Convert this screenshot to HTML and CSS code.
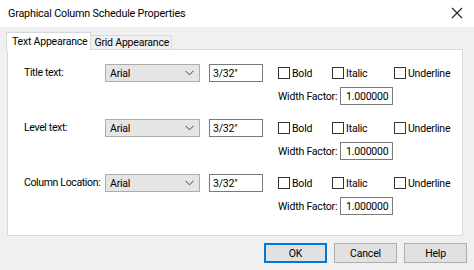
FILE: index.html
```html
<!DOCTYPE html>
<html>
<head>
<meta charset="utf-8">
<link rel="stylesheet" href="styles.css">
</head>
<body>
<div class="dialog">
  <div class="titlebar">
    <span class="title">Graphical Column Schedule Properties</span>
    <svg class="close" width="12" height="12" viewBox="0 0 12 12"><path d="M1 1 L11 11 M11 1 L1 11" stroke="#222" stroke-width="1.1" fill="none"/></svg>
  </div>
  <div class="content">
    <div class="tabs">
      <div class="tab active">Text Appearance</div>
      <div class="tab">Grid Appearance</div>
    </div>
    <div class="panel">
      <div class="group">
        <div class="line">
          <span class="label">Title text:</span>
          <div class="select"><span>Arial</span><svg width="9" height="6" viewBox="0 0 9 6"><path d="M0.5 0.8 L4.5 4.8 L8.5 0.8" stroke="#444" fill="none"/></svg></div>
          <div class="input size">3/32"</div>
          <div class="checks">
            <label class="check c1"><span class="box"></span>Bold</label>
            <label class="check c2"><span class="box"></span>Italic</label>
            <label class="check"><span class="box"></span>Underline</label>
          </div>
        </div>
        <div class="wf"><span class="wflabel">Width Factor:</span><div class="input num">1.000000</div></div>
      </div>
      <div class="group">
        <div class="line">
          <span class="label">Level text:</span>
          <div class="select"><span>Arial</span><svg width="9" height="6" viewBox="0 0 9 6"><path d="M0.5 0.8 L4.5 4.8 L8.5 0.8" stroke="#444" fill="none"/></svg></div>
          <div class="input size">3/32"</div>
          <div class="checks">
            <label class="check c1"><span class="box"></span>Bold</label>
            <label class="check c2"><span class="box"></span>Italic</label>
            <label class="check"><span class="box"></span>Underline</label>
          </div>
        </div>
        <div class="wf"><span class="wflabel">Width Factor:</span><div class="input num">1.000000</div></div>
      </div>
      <div class="group">
        <div class="line">
          <span class="label">Column Location:</span>
          <div class="select"><span>Arial</span><svg width="9" height="6" viewBox="0 0 9 6"><path d="M0.5 0.8 L4.5 4.8 L8.5 0.8" stroke="#444" fill="none"/></svg></div>
          <div class="input size">3/32"</div>
          <div class="checks">
            <label class="check c1"><span class="box"></span>Bold</label>
            <label class="check c2"><span class="box"></span>Italic</label>
            <label class="check"><span class="box"></span>Underline</label>
          </div>
        </div>
        <div class="wf"><span class="wflabel">Width Factor:</span><div class="input num">1.000000</div></div>
      </div>
    </div>
    <div class="buttons">
      <div class="btn default">OK</div>
      <div class="btn">Cancel</div>
      <div class="btn">Help</div>
    </div>
  </div>
</div>
</body>
</html>
```
FILE: styles.css
```css
* { box-sizing: border-box; }
html, body { margin: 0; padding: 0; }
body {
  width: 474px;
  height: 270px;
  overflow: hidden;
  font-family: Roboto, "Noto Sans", sans-serif;
  font-size: 10.5px;
  letter-spacing: -0.2px;
  color: #000;
  background: #f0f0f0;
  white-space: nowrap;
}
.dialog { width: 474px; height: 270px; display: flex; flex-direction: column; }
.titlebar {
  height: 27px;
  background: #fff;
  display: flex;
  align-items: center;
  justify-content: space-between;
  padding: 0 11px 0 8px;
  flex-shrink: 0;
}
.title { color: #000; font-size: 10.8px; }
.close { margin-top: -1px; }
.content { padding: 5px 11px 0 7px; flex: 1; display: flex; flex-direction: column; }
.tabs { display: flex; align-items: flex-end; height: 17px; margin-left: -1px; }
.tab {
  height: 14px;
  padding: 0 2px 0 3px;
  border: 1px solid #d9d9d9;
  border-bottom: none;
  background: #f0f0f0;
  line-height: 14px;
  margin-left: -1px;
}
.tab.active {
  height: 18px;
  background: #fff;
  padding: 0 3px 0 5px;
  line-height: 17px;
  position: relative;
  z-index: 1;
  margin-bottom: -1px;
  margin-left: 0;
}
.panel {
  height: 187px;
  background: #fff;
  border: 1px solid #d9d9d9;
  padding: 14px 0 0 16px;
  display: flex;
  flex-direction: column;
  gap: 14px;
}
.group { display: flex; flex-direction: column; gap: 5px; }
.line { display: flex; align-items: center; height: 18px; }
.label { width: 81px; margin-top: -2px; letter-spacing: -0.35px; }
.select {
  width: 95px;
  height: 18px;
  background: #e5e5e5;
  border: 1px solid #adadad;
  display: flex;
  align-items: center;
  justify-content: space-between;
  padding: 0 5px 0 4px;
}
.select span { margin-top: 1px; }
.input {
  height: 18px;
  border: 1px solid #7a7a7a;
  background: #fff;
  display: flex;
  align-items: center;
  padding: 0 3px;
}
.size { width: 54px; margin-left: 9px; }
.checks { display: flex; margin-left: 15px; }
.check { display: flex; align-items: center; }
.c1 { width: 54px; }
.c2 { width: 62px; }
.box {
  width: 12px;
  height: 12px;
  border: 1px solid #333;
  background: #fff;
  margin-right: 2px;
}
.wf { display: flex; align-items: center; height: 18px; padding-left: 254px; }
.wflabel { width: 62px; }
.num { width: 53px; padding-left: 5px; }
.buttons {
  display: flex;
  justify-content: flex-end;
  gap: 7px;
  margin-top: 7px;
  margin-right: -4px;
}
.btn {
  width: 63px;
  height: 20px;
  background: #e1e1e1;
  border: 1px solid #adadad;
  display: flex;
  align-items: center;
  justify-content: center;
}
.btn.default { border: 2px solid #0078d7; }
```
